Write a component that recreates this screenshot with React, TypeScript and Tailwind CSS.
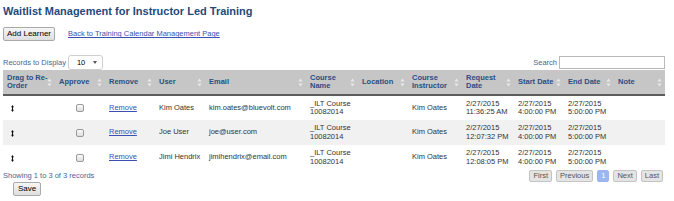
import React from "react";

type Row = {
  user: string;
  email: string;
  instructor: string;
  request: [string, string];
  start: [string, string];
  end: [string, string];
};

const rows: Row[] = [
  {
    user: "Kim Oates",
    email: "kim.oates@bluevolt.com",
    instructor: "Kim Oates",
    request: ["2/27/2015", "11:36:25 AM"],
    start: ["2/27/2015", "4:00:00 PM"],
    end: ["2/27/2015", "5:00:00 PM"],
  },
  {
    user: "Joe User",
    email: "joe@user.com",
    instructor: "Kim Oates",
    request: ["2/27/2015", "12:07:32 PM"],
    start: ["2/27/2015", "4:00:00 PM"],
    end: ["2/27/2015", "5:00:00 PM"],
  },
  {
    user: "Jimi Hendrix",
    email: "jimihendrix@email.com",
    instructor: "Kim Oates",
    request: ["2/27/2015", "12:08:05 PM"],
    start: ["2/27/2015", "4:00:00 PM"],
    end: ["2/27/2015", "5:00:00 PM"],
  },
];

const columns = [
  { label: ["Drag to Re-", "Order"], w: 52 },
  { label: ["Approve"], w: 50 },
  { label: ["Remove"], w: 50 },
  { label: ["User"], w: 50 },
  { label: ["Email"], w: 101 },
  { label: ["Course", "Name"], w: 52 },
  { label: ["Location"], w: 50 },
  { label: ["Course", "Instructor"], w: 54 },
  { label: ["Request", "Date"], w: 52 },
  { label: ["Start Date"], w: 50 },
  { label: ["End Date"], w: 50 },
  { label: ["Note"], w: 51 },
];

function SortIcon() {
  return (
    <svg width="5" height="9" viewBox="0 0 5 9" className="shrink-0">
      <path d="M2.5 0.5 L4.6 3.6 L0.4 3.6 Z" fill="#e8e8e8" />
      <path d="M2.5 8.5 L4.6 5.4 L0.4 5.4 Z" fill="#e8e8e8" />
    </svg>
  );
}

function DragIcon() {
  return (
    <svg width="3" height="7" viewBox="0 0 3 7">
      <path d="M1.5 0 L3 2.2 L0 2.2 Z" fill="#111" />
      <rect x="1" y="2" width="1" height="3" fill="#111" />
      <path d="M1.5 7 L3 4.8 L0 4.8 Z" fill="#111" />
    </svg>
  );
}

function Lines({ v }: { v: [string, string] }) {
  return (
    <>
      <div>{v[0]}</div>
      <div>{v[1]}</div>
    </>
  );
}

const btn =
  "border border-[#a9a9a9] rounded-[2px] bg-gradient-to-b from-[#f6f6f6] to-[#dedede] text-black font-normal";
const pageBtn =
  "h-[12px] px-[3px] rounded-[2px] border border-[#c4c4c4] bg-[#e4e4e4] text-[#555] text-[7.5px] leading-[10px]";

export default function App() {
  return (
    <div className="w-[674px] h-[201px] bg-white font-['Liberation_Sans',Arial,sans-serif] overflow-hidden">
      <div className="pl-[3px] pr-[9px] pt-[4px]">
        <h1 className="text-[11px] leading-[14px] font-bold text-[#1f4b7b]">
          Waitlist Management for Instructor Led Training
        </h1>

        <div className="flex items-center mt-[9px] h-[14px]">
          <button className={`${btn} h-[14px] w-[52px] text-[8px] leading-[12px]`}>
            Add Learner
          </button>
          <a href="#" className="ml-[13px] text-[7.5px] text-[#3c4fb3] underline">
            Back to Training Calendar Management Page
          </a>
        </div>

        <div className="flex items-center justify-between mt-[14px] h-[15px]">
          <div className="flex items-center text-[7.5px] text-[#4a6694]">
            <span>Records to Display</span>
            <div className="ml-[2px] w-[35px] h-[15px] border border-[#cfcfcf] rounded-[3px] bg-white flex items-center justify-between pl-[8px] pr-[5px] text-black">
              <span>10</span>
              <svg width="4" height="3" viewBox="0 0 4 3">
                <path d="M0 0 L4 0 L2 3 Z" fill="#555" />
              </svg>
            </div>
          </div>
          <div className="flex items-center text-[7.5px] text-[#4a6694]">
            <span>Search</span>
            <div className="ml-[2px] w-[106px] h-[13px] border border-[#b9b9b9] bg-white" />
          </div>
        </div>

        <table className="table-fixed border-collapse w-[662px] text-[7.5px] leading-[8.5px] text-[#333]">
          <colgroup>
            {columns.map((c, i) => (
              <col key={i} style={{ width: c.w }} />
            ))}
          </colgroup>
          <thead>
            <tr className="h-[25px] bg-[#c6c6c6] border-b-2 border-[#5c5c5c]">
              {columns.map((c, i) => (
                <th key={i} className="pl-[4px] pr-[3px] text-left font-bold text-[#2b4f82] align-middle">
                  <div className="flex items-center justify-between">
                    <div className="whitespace-nowrap">
                      {c.label.map((l) => (
                        <div key={l}>{l}</div>
                      ))}
                    </div>
                    <SortIcon />
                  </div>
                </th>
              ))}
            </tr>
          </thead>
          <tbody>
            {rows.map((r, i) => (
              <tr key={i} className={`h-[25px] ${i === 1 ? "bg-[#f1f1f1]" : "bg-white"}`}>
                <td className="pl-[8px] align-middle">
                  <div className="flex items-center pt-[1px]">
                    <DragIcon />
                  </div>
                </td>
                <td className="align-middle">
                  <div className="flex justify-center">
                    <span className="w-[8px] h-[8px] rounded-[2px] border border-[#9a9a9a] bg-gradient-to-b from-[#fafafa] to-[#dedede]" />
                  </div>
                </td>
                <td className="px-[4px] align-middle">
                  <a href="#" className="text-[#3c4fb3] underline">
                    Remove
                  </a>
                </td>
                <td className="px-[4px] align-middle">{r.user}</td>
                <td className="px-[4px] align-middle">{r.email}</td>
                <td className="px-[4px] align-middle">
                  <div>_ILT Course</div>
                  <div>10082014</div>
                </td>
                <td className="px-[4px] align-middle" />
                <td className="px-[4px] align-middle">{r.instructor}</td>
                <td className="px-[4px] align-middle">
                  <Lines v={r.request} />
                </td>
                <td className="px-[4px] align-middle">
                  <Lines v={r.start} />
                </td>
                <td className="px-[4px] align-middle">
                  <Lines v={r.end} />
                </td>
                <td className="px-[4px] align-middle" />
              </tr>
            ))}
          </tbody>
        </table>

        <div className="flex items-start justify-between h-[12px]">
          <div className="text-[7.5px] leading-[10px] text-[#4a6694] pt-[1px]">
            Showing 1 to 3 of 3 records
          </div>
          <div className="flex items-center gap-[4px] pr-[2px]">
            <button className={pageBtn}>First</button>
            <button className={pageBtn}>Previous</button>
            <button className="h-[12px] px-[3px] rounded-[2px] border border-[#9db4ea] bg-[#9cb6f0] text-white text-[7.5px] leading-[10px]">
              1
            </button>
            <button className={pageBtn}>Next</button>
            <button className={pageBtn}>Last</button>
          </div>
        </div>

        <div className="flex pl-[10px]">
          <button className={`${btn} h-[14px] w-[28px] text-[8px] leading-[12px]`}>Save</button>
        </div>
      </div>
    </div>
  );
}
